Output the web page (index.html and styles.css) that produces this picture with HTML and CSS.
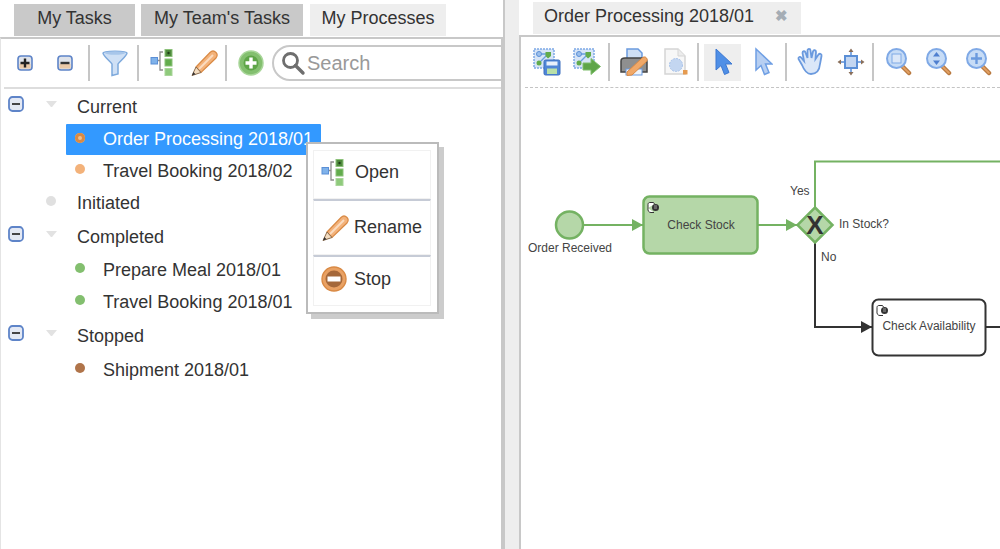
FILE: index.html
```html
<!DOCTYPE html>
<html lang="en">
<head>
<meta charset="utf-8">
<title>My Processes</title>
<link rel="stylesheet" href="styles.css">
</head>
<body>
<svg class="defs" width="0" height="0" aria-hidden="true">
  <symbol id="i-tree" viewBox="0 0 28 28">
    <path d="M13 3H10V11.500H7M10 11.500V21H13" fill="none" stroke="#8c8c8c" stroke-width="1.300"/>
    <rect x="1" y="8.500" width="6.500" height="6.500" fill="#7fb2ea" stroke="#5b8fd6"/>
    <rect x="15" y="0.500" width="7" height="7" fill="#4e8a3c" stroke="#8cc27a"/>
    <rect x="15" y="10" width="7" height="7" fill="#62ac4c" stroke="#8cc27a"/>
    <rect x="15" y="19.500" width="7" height="7" fill="#8fca7c" stroke="#a9d69a"/>
    <circle cx="18.500" cy="4" r="1.200" fill="#1f3d17"/>
  </symbol>
  <symbol id="i-pencil" viewBox="0 0 28 28">
    <path d="M6 18L20 3.500C22 1.500 24.500 2 26 3.500C27.500 5 27.500 7 26 9L11 23.500Z" fill="#f3b27a" stroke="#d98a45" stroke-width="1.200"/>
    <path d="M9 20L23 6" stroke="#fbdcc0" stroke-width="2"/>
    <path d="M6 18L2 26.500L11 23.500Z" fill="#f3dcc0" stroke="#8a6a4a"/>
    <path d="M3.500 23L2 26.500L5.500 25.300Z" fill="#333"/>
  </symbol>
  <symbol id="i-box" viewBox="0 0 16 16">
    <rect x="1" y="1" width="14" height="14" rx="3" fill="#dfe3ea" stroke="#5e84c8" stroke-width="1.600"/>
    <rect x="2.500" y="9" width="11" height="4.500" fill="#eac9a8"/>
  </symbol>
  <symbol id="i-manual" viewBox="0 0 14 13">
    <path d="M2 7V3.500C2 2 3 1.500 4 1.500H7.500L8.500 3M2 7C1.500 10 3 11.500 5 11.500H8" fill="#fff" stroke="#333" stroke-width="1"/>
    <circle cx="9.500" cy="6.500" r="3.500" fill="#333"/>
    <path d="M8 5H11M8 7H11" stroke="#bbb" stroke-width=".8"/>
  </symbol>
  <symbol id="i-zoom" viewBox="0 0 26 28">
    <path d="M15 17L23 25" stroke="#b9793f" stroke-width="4.500" stroke-linecap="round"/>
    <path d="M15 17L23 25" stroke="#e2a063" stroke-width="2" stroke-linecap="round" stroke-dasharray="2 1"/>
    <circle cx="10.500" cy="10.500" r="9.500" fill="#c7dcf6" stroke="#7fa9e6" stroke-width="2"/>
  </symbol>
  <symbol id="i-arrow" viewBox="0 0 20 30">
    <path d="M3 2V23L8 18.500L11.500 27.500L16 25.500L12.500 17H19Z"/>
  </symbol>
</svg>

<div class="app">
  <section class="left">
    <nav class="tabs left-tabs">
      <span class="tab tab-off tab-a">My Tasks</span>
      <span class="tab tab-off tab-b">My Team's Tasks</span>
      <span class="tab tab-on tab-c">My Processes</span>
    </nav>
    <div class="pane">
      <div class="toolbar left-bar">
        <span class="btn b-plus">
          <svg width="16" height="16" viewBox="0 0 16 16"><use href="#i-box"/><path d="M8 3.500V12.500M3.500 8H12.500" stroke="#222" stroke-width="2.400"/></svg>
        </span>
        <span class="btn b-minus">
          <svg width="16" height="16" viewBox="0 0 16 16"><use href="#i-box"/><path d="M3.500 8H12.500" stroke="#333" stroke-width="2.400"/></svg>
        </span>
        <i class="sep s-a"></i>
        <span class="btn b-filter">
          <svg width="26" height="28" viewBox="0 0 26 28"><path d="M1 4C1 1.500 25 1.500 25 4C25 7 17 13 16 15V25L10 26.500V15C9 13 1 7 1 4Z" fill="#cfe0f5" stroke="#7da9dc" stroke-width="1.500"/><ellipse cx="13" cy="4" rx="10" ry="1.800" fill="#a8c6ea"/></svg>
        </span>
        <i class="sep s-b"></i>
        <svg class="btn b-tree" width="28" height="28"><use href="#i-tree"/></svg>
        <svg class="btn b-pencil" width="28" height="28"><use href="#i-pencil"/></svg>
        <i class="sep s-c"></i>
        <span class="btn b-add">
          <svg width="26" height="26" viewBox="0 0 26 26"><circle cx="13" cy="13" r="12" fill="#83bf6f" stroke="#a9d69a" stroke-width="1.500"/><circle cx="13" cy="13" r="7.500" fill="#5ea548"/><path d="M13 7.500V18.500M7.500 13H18.500" stroke="#fff" stroke-width="3.400"/></svg>
        </span>
        <div class="search">
          <svg width="26" height="26" viewBox="0 0 26 26"><circle cx="10.500" cy="10.500" r="7" fill="#fff" stroke="#6e6e6e" stroke-width="2.800"/><path d="M15.500 15.500L23 23" stroke="#6e6e6e" stroke-width="3.400" stroke-linecap="round"/></svg>
          <span>Search</span>
        </div>
      </div>

      <ul class="tree">
        <li class="row group"><span class="toggle"><svg width="16" height="16"><rect x="1" y="1" width="14" height="14" rx="3.500" fill="#e4e9f4" stroke="#5e84c8" stroke-width="1.800"/><path d="M4 8H12" stroke="#333" stroke-width="1.800"/></svg></span><i class="fold"></i><span>Current</span></li>
        <li class="row leaf selected lift1"><i class="dot orange-dark"></i><span>Order Processing 2018/01</span></li>
        <li class="row leaf"><i class="dot orange"></i><span>Travel Booking 2018/02</span></li>
        <li class="row group"><span class="toggle"></span><i class="ball"></i><span>Initiated</span></li>
        <li class="row group lift2"><span class="toggle"><svg width="16" height="16"><rect x="1" y="1" width="14" height="14" rx="3.500" fill="#e4e9f4" stroke="#5e84c8" stroke-width="1.800"/><path d="M4 8H12" stroke="#333" stroke-width="1.800"/></svg></span><i class="fold"></i><span>Completed</span></li>
        <li class="row leaf lift1"><i class="dot green"></i><span>Prepare Meal 2018/01</span></li>
        <li class="row leaf"><i class="dot green"></i><span>Travel Booking 2018/01</span></li>
        <li class="row group lift2"><span class="toggle"><svg width="16" height="16"><rect x="1" y="1" width="14" height="14" rx="3.500" fill="#e4e9f4" stroke="#5e84c8" stroke-width="1.800"/><path d="M4 8H12" stroke="#333" stroke-width="1.800"/></svg></span><i class="fold"></i><span>Stopped</span></li>
        <li class="row leaf lift2"><i class="dot brown"></i><span>Shipment 2018/01</span></li>
      </ul>
    </div>

    <div class="menu">
      <div class="item item-open"><svg width="28" height="28"><use href="#i-tree"/></svg><span>Open</span></div>
      <div class="item item-rename"><svg width="28" height="28"><use href="#i-pencil"/></svg><span>Rename</span></div>
      <div class="item item-stop">
        <svg width="26" height="26" viewBox="0 0 26 26"><circle cx="13" cy="13" r="12" fill="#e9a163" stroke="#d98a45" stroke-width="1.400"/><circle cx="13" cy="13" r="8.500" fill="#a5683a"/><rect x="6.500" y="10.500" width="13" height="5" fill="#fff"/></svg>
        <span>Stop</span>
      </div>
    </div>
  </section>

  <div class="splitter"></div>

  <section class="right">
    <nav class="tabs right-tabs">
      <span class="tab tab-on tab-d">Order Processing 2018/01<b class="close">✖</b></span>
    </nav>
    <div class="pane pane-right">
      <div class="toolbar right-bar">
        <svg class="tool t1" width="28" height="28" viewBox="0 0 28 28"><rect x="1" y="1" width="20" height="19" fill="#d7e5f7" stroke="#7fa9e6" stroke-width="1.500" stroke-dasharray="2 1"/><path d="M6 6H15L6 15" fill="none" stroke="#6aa0de" stroke-width="1.400"/><circle cx="6" cy="6" r="2.500" fill="#9cc0ec" stroke="#5b8fd6"/><path d="M12.500 4H18V8L15 10.500L12.500 8Z" fill="#62ac4c"/><circle cx="6" cy="15" r="2.500" fill="#62ac4c"/><rect x="11" y="12" width="16" height="15" rx="1.500" fill="#4f86d6" stroke="#3c6fbe"/><rect x="13.500" y="13.500" width="11" height="4" fill="#e8f0fb"/><rect x="14" y="20.500" width="10" height="5.500" fill="#b9e0a8"/></svg>
        <svg class="tool t2" width="28" height="28" viewBox="0 0 28 28"><rect x="1" y="1" width="20" height="19" fill="#d7e5f7" stroke="#7fa9e6" stroke-width="1.500" stroke-dasharray="2 1"/><path d="M6 6H15L6 15" fill="none" stroke="#6aa0de" stroke-width="1.400"/><circle cx="6" cy="6" r="2.500" fill="#9cc0ec" stroke="#5b8fd6"/><path d="M12.500 4H18V8L15 10.500L12.500 8Z" fill="#62ac4c"/><circle cx="6" cy="15" r="2.500" fill="#62ac4c"/><path d="M10 15H18V10.500L27.500 18.500L18 26.500V22H10Z" fill="#5ea548" stroke="#7fbe6c"/></svg>
        <i class="sep s-d"></i>
        <svg class="tool t3" width="30" height="30" viewBox="0 0 30 30"><path d="M8 2H19L23 6V15H8Z" fill="#cfe0f5" stroke="#6b9ade" stroke-width="1.500"/><path d="M2 14C2 12 4 11 6 11H24C27 11 28 13 28 15V25H2Z" fill="#8f8f8f" stroke="#444" stroke-width="1.500"/><rect x="7" y="22" width="16" height="6" fill="#eef3fa" stroke="#6b9ade"/><path d="M8 25L23 11C25 9 27.500 10 28 12C28.500 13 28 14 27 15L13 28L8 28.500Z" fill="#f0a868" stroke="#d98a45"/></svg>
        <svg class="tool t4" width="26" height="28" viewBox="0 0 26 28"><path d="M2 1H15L22 8V26H2Z" fill="#f7f7f7" stroke="#d5d5d5" stroke-width="1.500"/><path d="M15 1V8H22" fill="#ececec" stroke="#d5d5d5"/><circle cx="13" cy="17" r="6.500" fill="#c3d6f1" stroke="#a7c2ea" stroke-dasharray="2 1"/><rect x="20" y="22" width="4.500" height="4.500" fill="#e59a50"/></svg>
        <i class="sep s-e"></i>
        <span class="active"><svg width="20" height="30"><use href="#i-arrow" fill="#4f8fe6" stroke="#3c78d2"/></svg></span>
        <svg class="tool t6" width="20" height="30"><use href="#i-arrow" fill="#b7cff2" stroke="#6f9fe4" stroke-width="1.500"/></svg>
        <i class="sep s-f"></i>
        <svg class="tool t7" width="28" height="28" viewBox="0 0 28 28"><path d="M5 17L1.500 11C1 9 3 8 4.500 10L7 13L5.500 5C5.500 3 8 2.500 8.500 4.500L10.500 10L10.500 2.500C10.500 .5 13.500 .5 13.500 2.500L14.500 10L16 3.500C16.500 1.500 19 2 19 4L18.500 11L21.500 6.500C23 5 25 6 24.500 8L23 16C22.500 22 20 26 14 26C9.500 26 7 22 5 17Z" fill="#dbe7f8" stroke="#6b9ade" stroke-width="1.800"/></svg>
        <svg class="tool t8" width="28" height="28" viewBox="0 0 28 28"><rect x="8" y="8" width="12" height="12" fill="#c3d6f1" stroke="#5b8fd6" stroke-width="2"/><path d="M14 8V3M14 20V25M8 14H3M20 14H25" stroke="#5b8fd6" stroke-width="1.500"/><path d="M11.500 4L14 .5L16.500 4ZM11.500 24L14 27.500L16.500 24ZM4 11.500L.5 14L4 16.500ZM24 11.500L27.500 14L24 16.500Z" fill="#8a6f5a"/></svg>
        <i class="sep s-g"></i>
        <svg class="tool t9" width="26" height="28"><use href="#i-zoom"/><rect x="6" y="6" width="9" height="9" fill="#dbe7f8" stroke="#7fa9e6"/></svg>
        <svg class="tool t10" width="26" height="28"><use href="#i-zoom"/><path d="M10.500 4L14 8.500H7ZM10.500 17L14 12.500H7Z" fill="#4f7fcf"/></svg>
        <svg class="tool t11" width="26" height="28"><use href="#i-zoom"/><path d="M10.500 5V16M5 10.500H16" stroke="#6b9ade" stroke-width="2.400"/></svg>
      </div>

      <svg class="diagram" width="479" height="460" viewBox="521 89 479 460">
        <defs>
          <marker id="ag" markerWidth="11" markerHeight="12" refX="11" refY="6" orient="auto" markerUnits="userSpaceOnUse"><path d="M0 0L11 6L0 12Z" fill="#74b262"/></marker>
          <marker id="ak" markerWidth="11" markerHeight="12" refX="11" refY="6" orient="auto" markerUnits="userSpaceOnUse"><path d="M0 0L11 6L0 12Z" fill="#333"/></marker>
        </defs>
        <path class="flow-g" d="M583 226H643" marker-end="url(#ag)"/>
        <path class="flow-g" d="M758 226H797" marker-end="url(#ag)"/>
        <path class="flow-g" d="M815 208V162.500H1000"/>
        <path class="flow-k" d="M815 244V328H872" marker-end="url(#ak)"/>
        <path class="flow-k" d="M986 328H1000"/>
        <circle class="node-g" cx="569.500" cy="226" r="13.500"/>
        <rect class="node-g" x="643.500" y="197.500" width="114" height="57" rx="6"/>
        <path class="node-g" d="M815 208.500L832.500 226L815 243.500L797.500 226Z"/>
        <text class="x-mark" x="815" y="235">X</text>
        <rect class="node-k" x="872.500" y="300.500" width="113" height="56" rx="6"/>
        <use href="#i-manual" x="646" y="202" width="14" height="13"/>
        <use href="#i-manual" x="875" y="305" width="14" height="13"/>
        <text class="label mid" x="701" y="229.500">Check Stock</text>
        <text class="label mid" x="929" y="331">Check Availability</text>
        <text class="label mid" x="570" y="253">Order Received</text>
        <text class="label" x="790" y="196">Yes</text>
        <text class="label" x="839" y="229">In Stock?</text>
        <text class="label" x="821" y="262">No</text>
      </svg>
    </div>
  </section>
</div>
</body>
</html>
```
FILE: styles.css
```css
* { box-sizing: border-box; }
html, body { margin: 0; height: 100%; }
body {
  width: 1000px;
  height: 549px;
  overflow: hidden;
  background: #fff;
  color: #333;
  font-family: "Liberation Sans", Arial, sans-serif;
  font-size: 18px;
}
.defs { position: absolute; }
.app { display: flex; height: 549px; }

/* panels */
.left { position: relative; width: 503px; flex: none; display: flex; flex-direction: column; }
.splitter {
  width: 16px;
  flex: none;
  background: #eee;
  border-left: 2px solid #c8c8c8;
}
.right { flex: 1; display: flex; flex-direction: column; min-width: 0; }

/* tabs */
.tabs { display: flex; height: 37px; flex: none; }
.left-tabs { padding: 4px 0 0 14px; }
.right-tabs { height: 35px; padding: 2px 0 0 14px; }
.tab {
  display: flex;
  align-items: center;
  justify-content: center;
  height: 32px;
  line-height: 28px;
  padding-bottom: 4px;
  white-space: nowrap;
}
.tab-off { background: #c9c9c9; }
.tab-on { background: #eee; }
.tab-a { width: 121px; }
.tab-b { width: 162px; margin-left: 6px; }
.tab-c { width: 136px; margin-left: 7px; }
.tab-d { width: 268px; justify-content: flex-start; padding-left: 11px; height: 32px; }
.close { margin-left: 21px; font-size: 15px; color: #a5adb5; }

.pane {
  height: 512px;
  border-top: 2px solid #c8c8c8;
  border-right: 2px solid #c8c8c8;
  border-left: 1px solid #e4e4e4;
}
.pane-right {
  height: 514px;
  border-right: 0;
  border-left: 2px solid #c8c8c8;
  display: flex;
  flex-direction: column;
}

/* toolbars */
.toolbar { position: relative; display: flex; align-items: center; flex: none; }
.left-bar {
  height: 50px;
  margin-left: 3px;
  border-bottom: 2px solid #ddd;
  overflow: hidden;
}
.right-bar {
  height: 51px;
  margin-left: 4px;
  border-bottom: 1px dashed #c4c4c4;
}
.btn { display: block; flex: none; line-height: 0; }
.sep { display: block; flex: none; width: 2px; height: 36px; background: #c6c6c6; }

.b-plus { margin-left: 13px; }
.b-minus { margin-left: 24px; }
.s-a { margin-left: 15px; }
.b-filter { margin-left: 12px; }
.s-b { margin-left: 9px; }
.b-tree { margin-left: 11px; }
.b-pencil { margin-left: 12px; }
.s-c { margin-left: 7px; }
.b-add { margin-left: 11px; }

.search {
  display: flex;
  align-items: center;
  gap: 1px;
  flex: none;
  width: 300px;
  height: 36px;
  margin-left: 8px;
  padding-left: 6px;
  border: 2px solid #c8c8c8;
  border-radius: 18px 0 0 18px;
  color: #999;
  font-size: 20px;
}

/* right toolbar */
.tool { display: block; flex: none; }
.t1 { margin-left: 8px; }
.t2 { margin-left: 12px; }
.s-d { margin-left: 7px; height: 38px; }
.t3 { margin-left: 9px; }
.t4 { margin-left: 14px; }
.s-e { margin-left: 8px; height: 38px; }
.active {
  display: flex;
  align-items: center;
  justify-content: center;
  flex: none;
  width: 37px;
  height: 37px;
  margin-left: 5px;
  background: #eee;
}
.t6 { margin-left: 12px; }
.s-f { margin-left: 12px; height: 38px; }
.t7 { margin-left: 10px; }
.t8 { margin-left: 12px; }
.s-g { margin-left: 7px; height: 38px; }
.t9 { margin-left: 12px; }
.t10 { margin-left: 14px; }
.t11 { margin-left: 14px; }

/* tree */
.tree { list-style: none; margin: 0; padding: 2px 0 0; }
.row { display: flex; align-items: center; height: 32px; white-space: nowrap; }
.lift1 { margin-top: 1px; }
.lift2 { margin-top: 2px; }
.group > span:last-child { margin-left: 0; }
.toggle { display: block; flex: none; width: 45px; padding-left: 7px; line-height: 0; }
.toggle svg { display: block; transform: translateY(-3px); }
.fold {
  flex: none;
  width: 11px;
  height: 6px;
  margin-right: 20px;
  background: #e2e2e2;
  clip-path: polygon(0 0, 100% 0, 55% 100%, 45% 100%);
  transform: translateY(-3px);
}
.ball {
  flex: none;
  width: 10px;
  height: 10px;
  margin: 0 21px 0 0;
  border-radius: 50%;
  background: #e0e0e0;
  transform: translateY(-2px);
}
.leaf { margin-left: 65px; width: 255px; padding-left: 9px; }
.selected { background: #39f; color: #fff; height: 31px; border-radius: 1px; }
.dot {
  flex: none;
  width: 10px;
  height: 10px;
  margin-right: 18px;
  border-radius: 50%;
  transform: translateY(-2px);
}
.orange-dark { background: #e59a50; box-shadow: inset 0 0 0 3px #d98a45, inset 0 0 0 5px #f3c08c; }
.orange { background: #f3b27a; }
.green { background: #83bf6f; }
.brown { background: #b0744a; }

/* context menu */
.menu {
  position: absolute;
  left: 306px;
  top: 142px;
  width: 133px;
  height: 172px;
  padding: 6px 6px 6px 5px;
  background: #fff;
  border: 2px solid #bbb;
  box-shadow: 5px 5px 0 #ccc;
  display: flex;
  flex-direction: column;
}
.item {
  display: flex;
  align-items: center;
  gap: 6px;
  padding-left: 7px;
  border: 1px solid #f1f1f1;
  white-space: nowrap;
}
.item svg { flex: none; }
.item-open { height: 50px; padding-bottom: 4px; }
.item-rename { height: 56px; border-top: 2px solid #c6cbd6; gap: 5px; padding-left: 7px; }
.item-stop { height: 52px; border-top: 2px solid #c6cbd6; gap: 7px; padding-bottom: 3px; }

/* diagram */
.diagram { display: block; flex: none; }
.flow-g { fill: none; stroke: #74b262; stroke-width: 2; }
.flow-k { fill: none; stroke: #333; stroke-width: 2; }
.node-g { fill: #b5d7a8; stroke: #74b262; stroke-width: 2.500; }
.node-k { fill: #fff; stroke: #333; stroke-width: 2; }
.x-mark { font-family: "Liberation Sans", Arial, sans-serif; font-size: 26px; font-weight: 700; text-anchor: middle; fill: #333; }
.label { font-family: "Liberation Sans", Arial, sans-serif; font-size: 12px; fill: #444; }
.mid { text-anchor: middle; }
```
